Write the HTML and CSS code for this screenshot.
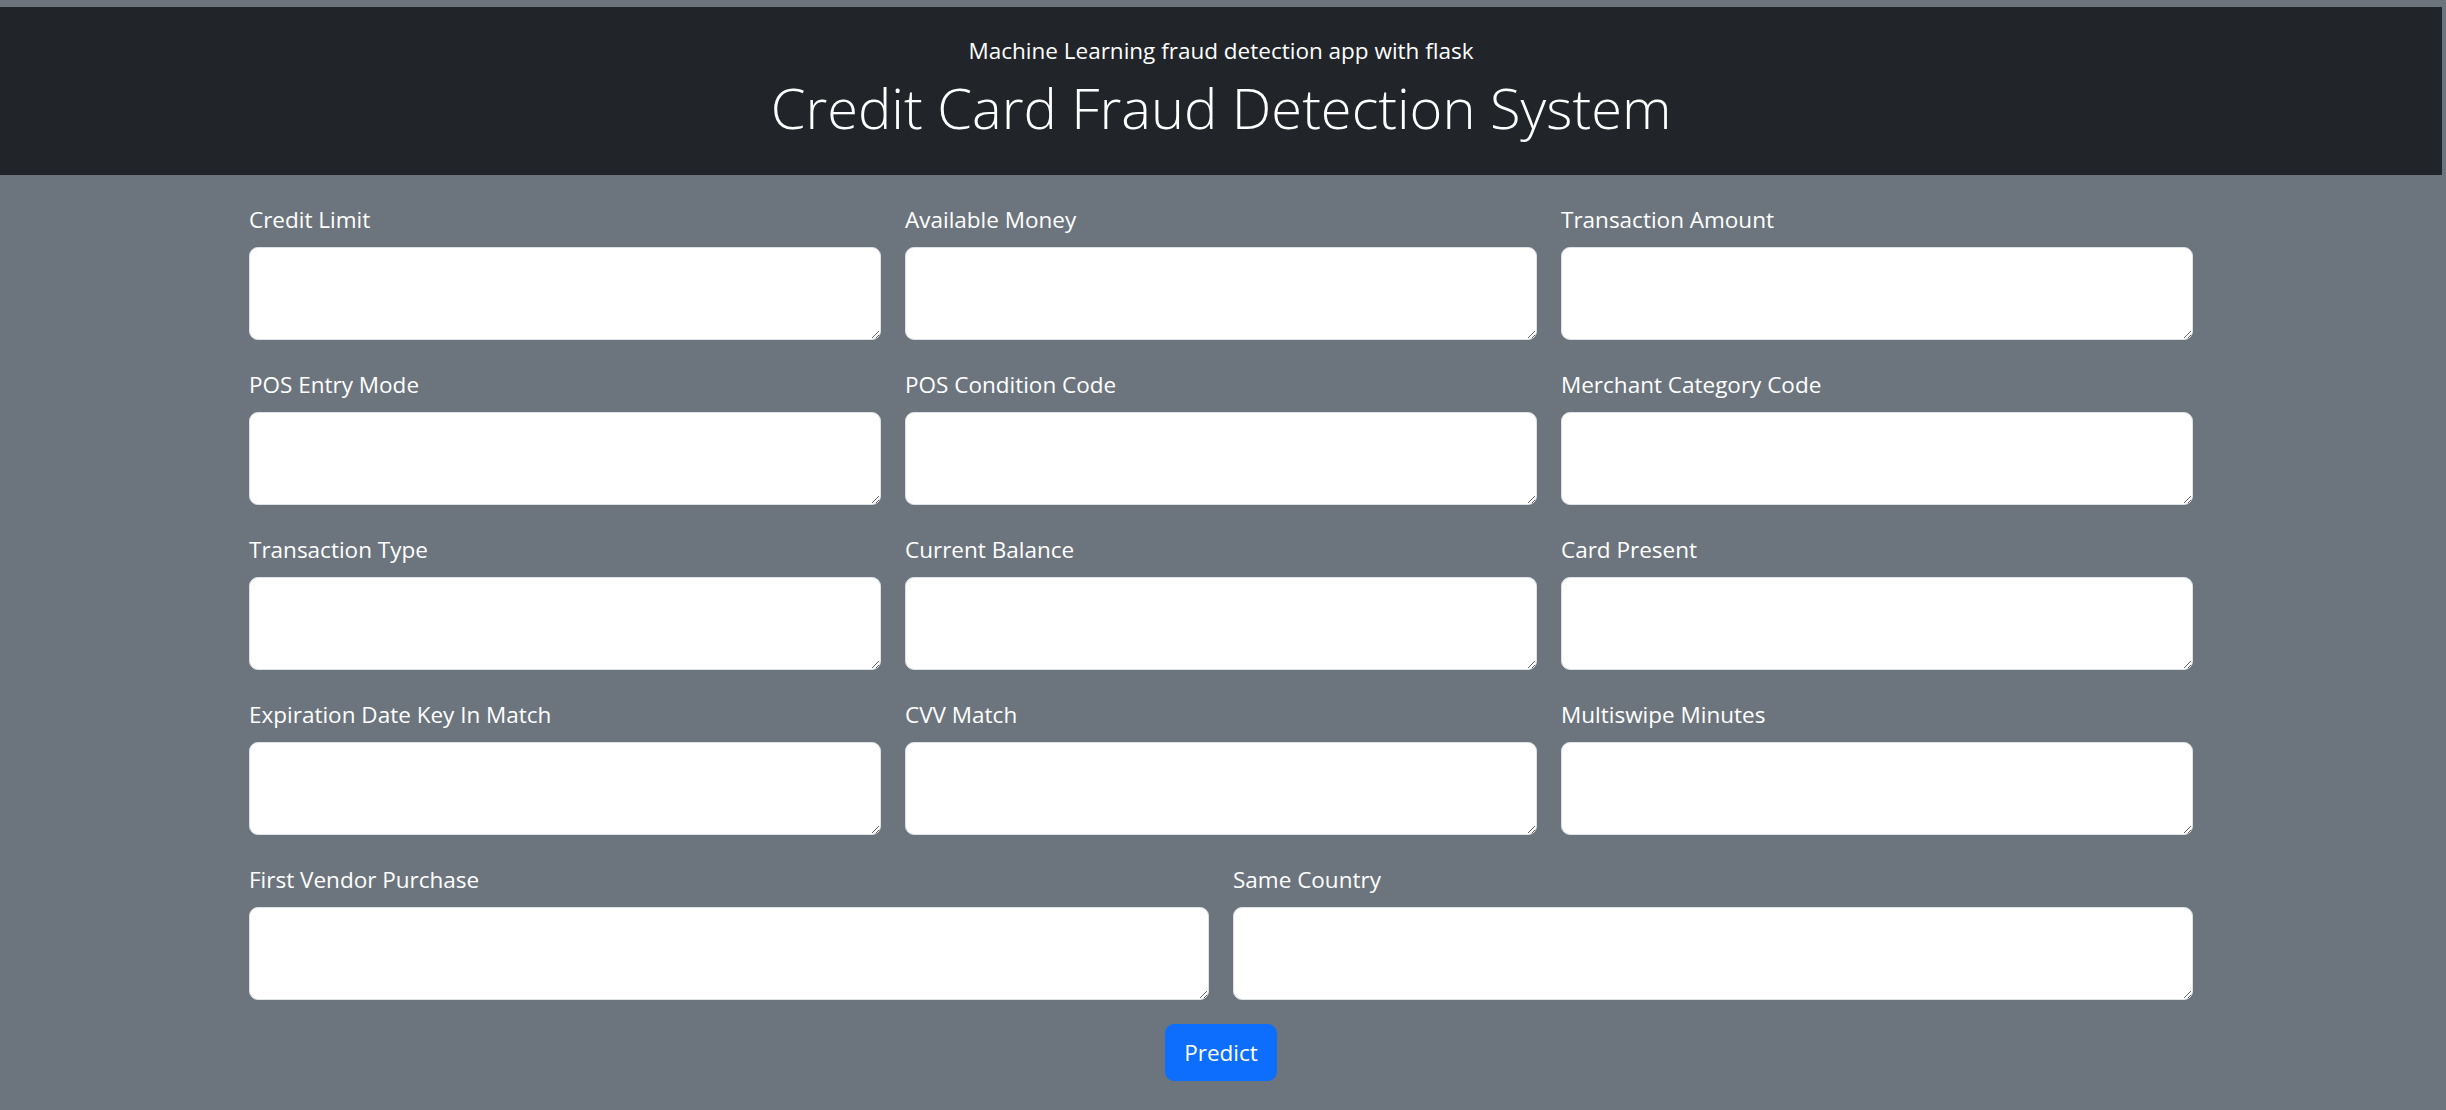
FILE: index.html
```html
<!DOCTYPE html>
<html lang="en">
<head>
<meta charset="utf-8">
<title>Credit Card Fraud Detection System</title>
<link rel="stylesheet" href="styles.css">
</head>
<body>
<header class="hero">
  <p class="tagline">Machine Learning fraud detection app with flask</p>
  <h1 class="title">Credit Card Fraud Detection System</h1>
</header>
<main class="container">
  <form class="fields">
    <div class="row row-3">
      <div class="field"><label>Credit Limit</label><textarea rows="2"></textarea></div>
      <div class="field"><label>Available Money</label><textarea rows="2"></textarea></div>
      <div class="field"><label>Transaction Amount</label><textarea rows="2"></textarea></div>
    </div>
    <div class="row row-3">
      <div class="field"><label>POS Entry Mode</label><textarea rows="2"></textarea></div>
      <div class="field"><label>POS Condition Code</label><textarea rows="2"></textarea></div>
      <div class="field"><label>Merchant Category Code</label><textarea rows="2"></textarea></div>
    </div>
    <div class="row row-3">
      <div class="field"><label>Transaction Type</label><textarea rows="2"></textarea></div>
      <div class="field"><label>Current Balance</label><textarea rows="2"></textarea></div>
      <div class="field"><label>Card Present</label><textarea rows="2"></textarea></div>
    </div>
    <div class="row row-3">
      <div class="field"><label>Expiration Date Key In Match</label><textarea rows="2"></textarea></div>
      <div class="field"><label>CVV Match</label><textarea rows="2"></textarea></div>
      <div class="field"><label>Multiswipe Minutes</label><textarea rows="2"></textarea></div>
    </div>
    <div class="row row-2">
      <div class="field"><label>First Vendor Purchase</label><textarea rows="2"></textarea></div>
      <div class="field"><label>Same Country</label><textarea rows="2"></textarea></div>
    </div>
    <div class="actions"><button type="button" class="btn">Predict</button></div>
  </form>
</main>
</body>
</html>
```
FILE: styles.css
```css
html, body {
  margin: 0;
  background: #6c757d;
}
body {
  padding-right: 4px;
  font-family: "Open Sans", "Noto Sans", sans-serif;
  color: #fff;
}
.hero {
  background: #212529;
  margin-top: 7px;
  padding: 24px;
  text-align: center;
}
.tagline {
  margin: 0;
  padding-top: 2px;
  font-size: 22.5px;
  line-height: 36px;
}
.title {
  margin: 0 0 8px;
  padding-top: 2px;
  font-size: 56px;
  font-weight: 300;
  line-height: 72px;
}
.container {
  width: 1944px;
  margin: 0 auto;
  padding-top: 24px;
}
.fields {
  display: flex;
  flex-direction: column;
  gap: 24px;
}
.row {
  display: grid;
  column-gap: 24px;
}
.row-3 {
  grid-template-columns: repeat(3, 1fr);
}
.row-2 {
  grid-template-columns: repeat(2, 1fr);
}
.field label {
  display: block;
  padding-top: 3px;
  font-size: 22.5px;
  line-height: 36px;
  margin-bottom: 9px;
}
.field textarea {
  display: block;
  box-sizing: border-box;
  width: 100%;
  height: 93px;
  margin: 0;
  padding: 9px 18px;
  background: #fff;
  border: 1.5px solid #dee2e6;
  border-radius: 9px;
  font: inherit;
  font-size: 24px;
  resize: vertical;
  outline: none;
}
.actions {
  display: flex;
  justify-content: center;
}
.btn {
  background: #0d6efd;
  color: #fff;
  border: 1.5px solid #0d6efd;
  border-radius: 9px;
  padding: 10px 18px 9px;
  font-family: inherit;
  font-size: 22.5px;
  line-height: 36px;
  cursor: pointer;
}
```
